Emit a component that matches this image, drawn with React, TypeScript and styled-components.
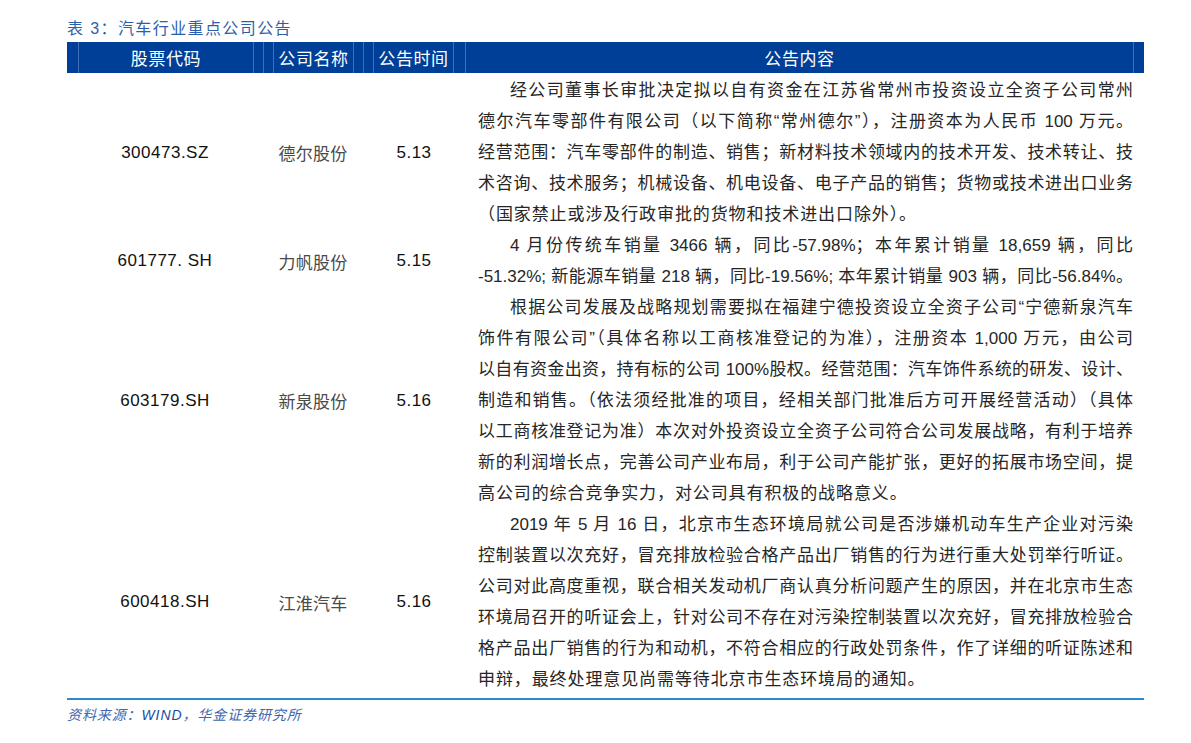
import React from "react";
import styled, { createGlobalStyle } from "styled-components";

const GlobalStyle = createGlobalStyle`
  html, body {
    margin: 0;
    padding: 0;
    background: #ffffff;
  }
  body {
    font-family: "Liberation Sans", "Noto Sans CJK SC", sans-serif;
    color: #222222;
  }
`;

const HEADER_BLUE = "#003f97";
const LINE_HEIGHT = 31;

const Page = styled.div`
  width: 1077px;
  padding-left: 67px;
`;

const Caption = styled.div`
  box-sizing: border-box;
  height: 42px;
  padding-top: 19px;
  line-height: 20px;
  font-size: 16px;
  letter-spacing: 1.4px;
  color: #2c5fab;
`;

const HeaderRow = styled.div`
  display: grid;
  grid-template-columns: 11px 175px 10px 10px 80px 10px 10px 80px 12px 1fr 11px;
  height: 31px;
  background: ${HEADER_BLUE};
`;

const HeaderCell = styled.div<{ $first?: boolean }>`
  display: flex;
  align-items: center;
  justify-content: center;
  border-left: ${(p) => (p.$first ? "none" : "1px solid rgba(140, 170, 225, 0.45)")};
  color: #ffffff;
  font-size: 17px;
  letter-spacing: 0.6px;
`;

const Body = styled.div`
  padding-top: 2px;
  padding-bottom: 3px;
  border-bottom: 2px solid #2b8ad0;
`;

const Row = styled.div`
  display: grid;
  grid-template-columns: 196px 100px 102px 1fr;
`;

const CenterCell = styled.div<{ $muted?: boolean }>`
  display: flex;
  align-items: center;
  justify-content: center;
  font-size: 17px;
  letter-spacing: ${(p) => (p.$muted ? "0.3px" : "0.5px")};
  color: ${(p) => (p.$muted ? "#4a4a4a" : "#111111")};
`;

const Content = styled.div`
  padding: 0 11px 0 13px;
`;

const Line = styled.div<{ $indent?: boolean; $last?: boolean }>`
  height: ${LINE_HEIGHT}px;
  line-height: ${LINE_HEIGHT}px;
  font-size: 17px;
  white-space: nowrap;
  color: #262626;
  padding-left: ${(p) => (p.$indent ? "32px" : "0")};
  letter-spacing: ${(p) => (p.$last ? "0.9px" : "0")};
  text-align: ${(p) => (p.$last ? "left" : "justify")};
  text-align-last: ${(p) => (p.$last ? "left" : "justify")};
  text-justify: inter-character;
`;

const Source = styled.div`
  margin-top: 5px;
  line-height: 20px;
  font-size: 14px;
  font-style: italic;
  letter-spacing: 0.9px;
  color: #3a68b0;
`;

const SourceStrong = styled.span`
  color: #1a4c9e;
`;

interface Announcement {
  code: string;
  name: string;
  date: string;
  lines: string[];
  // the last line fills the width and is justified too
  fullLast?: boolean;
}

const announcements: Announcement[] = [
  {
    code: "300473.SZ",
    name: "德尔股份",
    date: "5.13",
    lines: [
      "经公司董事长审批决定拟以自有资金在江苏省常州市投资设立全资子公司常州",
      "德尔汽车零部件有限公司（以下简称“常州德尔”），注册资本为人民币 100 万元。",
      "经营范围：汽车零部件的制造、销售；新材料技术领域内的技术开发、技术转让、技",
      "术咨询、技术服务；机械设备、机电设备、电子产品的销售；货物或技术进出口业务",
      "（国家禁止或涉及行政审批的货物和技术进出口除外）。",
    ],
  },
  {
    code: "601777. SH",
    name: "力帆股份",
    date: "5.15",
    fullLast: true,
    lines: [
      "4 月份传统车销量 3466 辆，同比-57.98%；本年累计销量 18,659 辆，同比",
      "-51.32%; 新能源车销量 218 辆，同比-19.56%; 本年累计销量 903 辆，同比-56.84%。",
    ],
  },
  {
    code: "603179.SH",
    name: "新泉股份",
    date: "5.16",
    lines: [
      "根据公司发展及战略规划需要拟在福建宁德投资设立全资子公司“宁德新泉汽车",
      "饰件有限公司”（具体名称以工商核准登记的为准），注册资本 1,000 万元，由公司",
      "以自有资金出资，持有标的公司 100%股权。经营范围：汽车饰件系统的研发、设计、",
      "制造和销售。（依法须经批准的项目，经相关部门批准后方可开展经营活动）（具体",
      "以工商核准登记为准）本次对外投资设立全资子公司符合公司发展战略，有利于培养",
      "新的利润增长点，完善公司产业布局，利于公司产能扩张，更好的拓展市场空间，提",
      "高公司的综合竞争实力，对公司具有积极的战略意义。",
    ],
  },
  {
    code: "600418.SH",
    name: "江淮汽车",
    date: "5.16",
    lines: [
      "2019 年 5 月 16 日，北京市生态环境局就公司是否涉嫌机动车生产企业对污染",
      "控制装置以次充好，冒充排放检验合格产品出厂销售的行为进行重大处罚举行听证。",
      "公司对此高度重视，联合相关发动机厂商认真分析问题产生的原因，并在北京市生态",
      "环境局召开的听证会上，针对公司不存在对污染控制装置以次充好，冒充排放检验合",
      "格产品出厂销售的行为和动机，不符合相应的行政处罚条件，作了详细的听证陈述和",
      "申辩，最终处理意见尚需等待北京市生态环境局的通知。",
    ],
  },
];

// header cells including the thin spacer columns between the titles
const headerCells = ["", "股票代码", "", "", "公司名称", "", "", "公告时间", "", "公告内容", ""];

const App: React.FC = () => {
  return (
    <>
      <GlobalStyle />
      <Page>
        <Caption>表 3：汽车行业重点公司公告</Caption>
        <HeaderRow>
          {headerCells.map((label, index) => (
            <HeaderCell key={index} $first={index === 0}>
              {label}
            </HeaderCell>
          ))}
        </HeaderRow>
        <Body>
          {announcements.map((item) => (
            <Row key={item.code}>
              <CenterCell>{item.code}</CenterCell>
              <CenterCell $muted>{item.name}</CenterCell>
              <CenterCell>{item.date}</CenterCell>
              <Content>
                {item.lines.map((text, i) => (
                  <Line
                    key={i}
                    $indent={i === 0}
                    $last={i === item.lines.length - 1 && !item.fullLast}
                  >
                    {text}
                  </Line>
                ))}
              </Content>
            </Row>
          ))}
        </Body>
        <Source>
          资料来源：<SourceStrong>WIND</SourceStrong>，华金证券研究所
        </Source>
      </Page>
    </>
  );
};

export default App;
